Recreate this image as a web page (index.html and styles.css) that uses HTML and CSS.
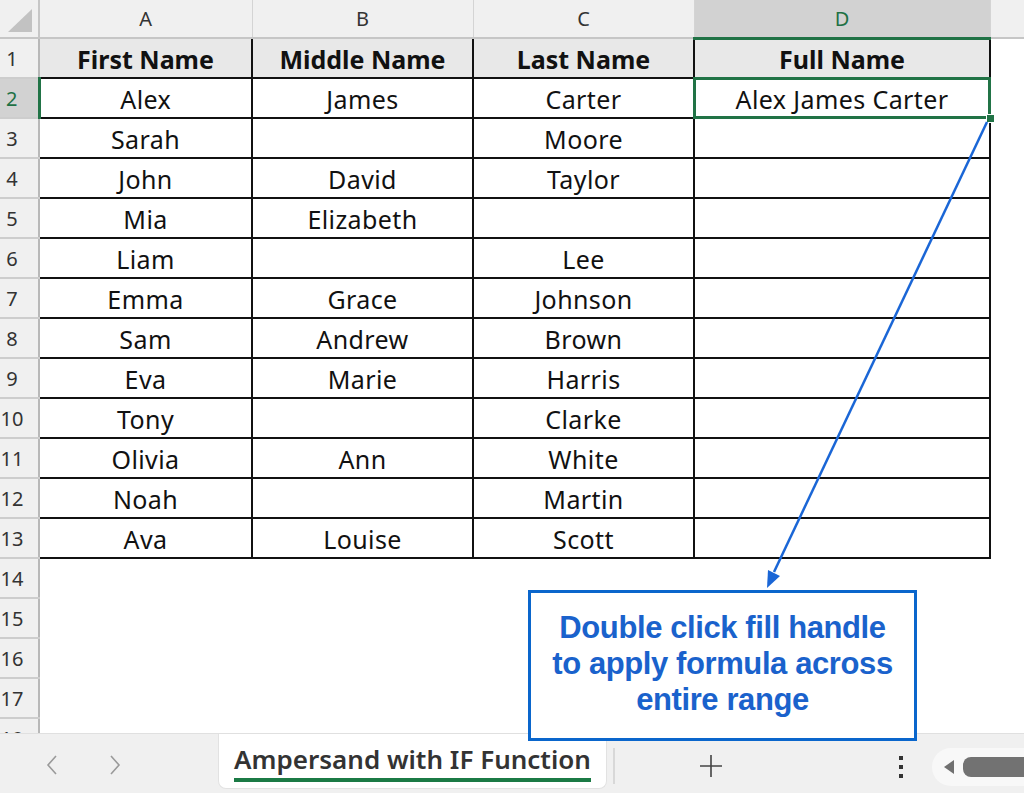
FILE: index.html
```html
<!DOCTYPE html>
<html>
<head>
<meta charset="utf-8">
<link rel="stylesheet" href="styles.css">
</head>
<body>
<div class="app">
  <div class="sheet">
    <table class="grid">
      <colgroup>
        <col class="c-rh"><col class="c-a"><col class="c-b"><col class="c-c"><col class="c-d"><col class="c-e">
      </colgroup>
      <thead>
        <tr class="colhdr">
          <th class="corner"><span class="tri"></span></th>
          <th>A</th><th>B</th><th>C</th><th class="sel">D</th><th class="empty"></th>
        </tr>
      </thead>
      <tbody>
        <tr class="hrow"><th class="rh">1</th><td>First Name</td><td>Middle Name</td><td>Last Name</td><td>Full Name</td><td class="out"></td></tr>
        <tr><th class="rh sel">2</th><td>Alex</td><td>James</td><td>Carter</td><td class="active">Alex James Carter<span class="handle"></span></td><td class="out"></td></tr>
        <tr><th class="rh">3</th><td>Sarah</td><td></td><td>Moore</td><td></td><td class="out"></td></tr>
        <tr><th class="rh">4</th><td>John</td><td>David</td><td>Taylor</td><td></td><td class="out"></td></tr>
        <tr><th class="rh">5</th><td>Mia</td><td>Elizabeth</td><td></td><td></td><td class="out"></td></tr>
        <tr><th class="rh">6</th><td>Liam</td><td></td><td>Lee</td><td></td><td class="out"></td></tr>
        <tr><th class="rh">7</th><td>Emma</td><td>Grace</td><td>Johnson</td><td></td><td class="out"></td></tr>
        <tr><th class="rh">8</th><td>Sam</td><td>Andrew</td><td>Brown</td><td></td><td class="out"></td></tr>
        <tr><th class="rh">9</th><td>Eva</td><td>Marie</td><td>Harris</td><td></td><td class="out"></td></tr>
        <tr><th class="rh">10</th><td>Tony</td><td></td><td>Clarke</td><td></td><td class="out"></td></tr>
        <tr><th class="rh">11</th><td>Olivia</td><td>Ann</td><td>White</td><td></td><td class="out"></td></tr>
        <tr><th class="rh">12</th><td>Noah</td><td></td><td>Martin</td><td></td><td class="out"></td></tr>
        <tr><th class="rh">13</th><td>Ava</td><td>Louise</td><td>Scott</td><td></td><td class="out"></td></tr>
        <tr class="blank"><th class="rh">14</th><td></td><td></td><td></td><td></td><td></td></tr>
        <tr class="blank"><th class="rh">15</th><td></td><td></td><td></td><td></td><td></td></tr>
        <tr class="blank"><th class="rh">16</th><td></td><td></td><td></td><td></td><td></td></tr>
        <tr class="blank"><th class="rh">17</th><td></td><td></td><td></td><td></td><td></td></tr>
        <tr class="blank"><th class="rh">18</th><td></td><td></td><td></td><td></td><td></td></tr>
      </tbody>
    </table>
  </div>
  <div class="tabbar">
    <div class="nav">
      <svg class="chev" width="14" height="22" viewBox="0 0 14 22"><path d="M11 2 L3 11 L11 20" fill="none" stroke="#9a9a9a" stroke-width="1.6"/></svg>
      <svg class="chev" width="14" height="22" viewBox="0 0 14 22"><path d="M3 2 L11 11 L3 20" fill="none" stroke="#9a9a9a" stroke-width="1.6"/></svg>
    </div>
    <div class="tab"><span class="tabtext">Ampersand with IF Function</span></div>
    <div class="sep"></div>
    <div class="plus"><svg width="24" height="24" viewBox="0 0 24 24"><path d="M12 1 V23 M1 12 H23" stroke="#444" stroke-width="1.6"/></svg></div>
    <div class="more"><span></span><span></span><span></span></div>
    <div class="scroll">
      <svg width="12" height="16" viewBox="0 0 12 16"><path d="M11 1 L1 8 L11 15 Z" fill="#707070"/></svg>
      <div class="thumb"></div>
    </div>
  </div>

  <svg class="arrow" width="1024" height="793" viewBox="0 0 1024 793">
    <line x1="987" y1="122" x2="774" y2="572" stroke="#1a66d6" stroke-width="2.5"/>
    <polygon points="767,588 780,576 768,570" fill="#1a66d6"/>
  </svg>
  <div class="callout">Double click fill handle<br>to apply formula across<br>entire range</div>
</div>
</body>
</html>
```

FILE: styles.css
```css
* { box-sizing: border-box; }
html, body { margin: 0; padding: 0; background: #fff; }
.app {
  position: relative;
  width: 1024px;
  height: 793px;
  overflow: hidden;
  display: flex;
  flex-direction: column;
  font-family: "Noto Sans", "Open Sans", sans-serif;
}
.sheet { flex: 1; overflow: hidden; }
.grid {
  border-collapse: collapse;
  table-layout: fixed;
  width: 1024px;
}
.c-rh { width: 39px; }
.c-a { width: 213px; }
.c-b { width: 221px; }
.c-c { width: 221px; }
.c-d { width: 296px; }
.c-e { width: 34px; }

.colhdr th {
  height: 38px;
  background: #f0f0f0;
  font-weight: normal;
  font-size: 20px;
  color: #333;
  border-right: 1px solid #d4d4d4;
  border-bottom: 2px solid #c6c6c6;
  padding: 0;
  text-align: center;
}
.colhdr th.corner { position: relative; border-right: 2px solid #c6c6c6; }
.tri {
  position: absolute;
  left: 8px; top: 9px;
  width: 0; height: 0;
  border-left: 24px solid transparent;
  border-bottom: 23px solid #c2c2c2;
}
.colhdr th.sel {
  background: #d2d2d2;
  color: #1e7145;
  border-bottom: 3px solid #217346;
}
.colhdr th.empty { border-right: none; }

tbody tr { height: 40px; }
th.rh {
  background: #f0f0f0;
  font-weight: normal;
  font-size: 20px;
  color: #333;
  text-align: center;
  padding: 0 14px 0 0;
  border-right: 2px solid #b8b8b8;
  border-bottom: 2px solid #cdcdcd;
}
th.rh.sel {
  background: #d2d2d2;
  color: #1e7145;
  border-right: 3px solid #217346;
}
td {
  border: 2px solid #111;
  text-align: center;
  font-size: 25px;
  letter-spacing: 0.4px;
  color: #111;
  padding: 1px 0 0 0;
  line-height: 30px;
  white-space: nowrap;
}
td.out { border: none; border-left: 2px solid #111; }
.hrow td { background: #e8e8e8; font-weight: bold; letter-spacing: 0; }
.hrow td.out { background: #fff; }
td.active {
  position: relative;
  outline: 3px solid #217346;
  outline-offset: -2px;
}
.handle {
  position: absolute;
  right: -6px; bottom: -6px;
  width: 9px; height: 9px;
  background: #217346;
  border: 1px solid #fff;
}
tr.blank td { border: none; }

.tabbar {
  flex: 0 0 60px;
  background: #f0f0f0;
  border-top: 1px solid #e0e0e0;
  display: flex;
  align-items: flex-start;
  position: relative;
}
.nav {
  width: 218px;
  display: flex;
  gap: 49px;
  padding: 20px 0 0 45px;
}
.tab {
  width: 389px;
  height: 55px;
  background: #fff;
  border: 1px solid #e2e2e2;
  border-top: none;
  border-radius: 0 0 8px 8px;
  display: flex;
  justify-content: center;
  padding-top: 10px;
}
.tabtext {
  font-size: 26px;
  font-weight: 600;
  color: #333;
  height: 38px;
  border-bottom: 4px solid #1b7a45;
  line-height: 30px;
}
.sep { width: 2px; height: 36px; background: #d8d8d8; margin: 14px 0 0 6px; }
.plus { margin: 20px 0 0 84px; }
.more {
  margin: 22px 0 0 176px;
  display: flex; flex-direction: column; gap: 5px;
}
.more span { width: 4px; height: 4px; background: #333; }
.scroll {
  margin: 14px 0 0 29px;
  flex: 1;
  height: 38px;
  background: #f8f8f8;
  border-radius: 19px 0 0 19px;
  display: flex;
  align-items: center;
  padding-left: 11px;
  gap: 8px;
}
.thumb { flex: 1; height: 20px; background: #727272; border-radius: 8px 0 0 8px; }

.arrow { position: absolute; left: 0; top: 0; pointer-events: none; }
.callout {
  position: absolute;
  left: 528px; top: 590px;
  width: 389px; height: 151px;
  border: 3px solid #0a66cc;
  background: #fff;
  color: #1a62cc;
  font-family: "Liberation Sans", Arial, sans-serif;
  font-weight: bold;
  font-size: 31px;
  line-height: 36px;
  text-align: center;
  padding-top: 17px;
  letter-spacing: -0.4px;
}
```
